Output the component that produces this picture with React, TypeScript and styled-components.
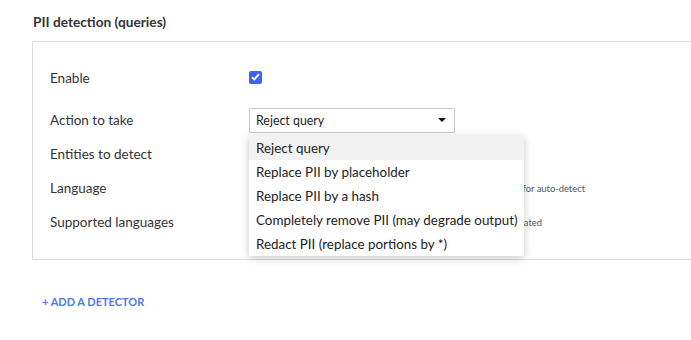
import React from "react";
import styled, { createGlobalStyle } from "styled-components";

const Global = createGlobalStyle`
  html, body { margin: 0; padding: 0; background: #fff; overflow: hidden; }
  body { font-family: "Lato", "Liberation Sans", sans-serif; color: #333; }
`;

const Page = styled.div`
  width: 691px;
  height: 340px;
  overflow: hidden;
  padding-top: 13px;
  box-sizing: border-box;
`;

const Title = styled.h3`
  margin: 0 0 0 33px;
  font-size: 13.7px;
  font-weight: 700;
  line-height: 18px;
  color: #333;
`;

const Panel = styled.div`
  margin: 10px 0 0 32px;
  width: 720px;
  border: 1px solid #dcdcdc;
  box-sizing: border-box;
  padding: 19px 0 20px 17px;
  display: flex;
  flex-direction: column;
`;

const Row = styled.div<{ $gap?: number }>`
  display: flex;
  align-items: center;
  height: 34px;
  margin-top: ${(p) => p.$gap ?? 0}px;
  position: relative;
`;

const Label = styled.div`
  width: 199px;
  flex: none;
  font-size: 13.5px;
  color: #333;
`;

const Value = styled.div`
  position: relative;
  display: flex;
  align-items: center;
  flex: 1;
`;

const Check = styled.span`
  width: 13px;
  height: 13px;
  border-radius: 2px;
  background: #3d63f2;
  display: inline-flex;
  align-items: center;
  justify-content: center;
  margin-top: -2px;
`;

const Select = styled.div`
  width: 206px;
  height: 25px;
  box-sizing: border-box;
  border: 1px solid #c8c8c8;
  border-radius: 1px;
  display: flex;
  align-items: center;
  justify-content: space-between;
  padding: 0 8px 0 6px;
  font-size: 12.4px;
  color: #222;
  background: #fff;
`;

const Arrow = styled.span`
  width: 0;
  height: 0;
  border-left: 4px solid transparent;
  border-right: 4px solid transparent;
  border-top: 4px solid #111;
`;

const Help = styled.span<{ $end: number }>`
  display: block;
  width: ${(p) => p.$end}px;
  text-align: right;
  font-size: 9.4px;
  color: #555;
  white-space: nowrap;
`;

const Menu = styled.ul`
  position: absolute;
  left: 0;
  top: 28px;
  width: 275px;
  margin: 0;
  padding: 0;
  list-style: none;
  background: #fff;
  box-shadow: 0 2px 8px rgba(0, 0, 0, 0.22);
  z-index: 10;
`;

const Item = styled.li<{ $active?: boolean }>`
  height: 24px;
  line-height: 24px;
  padding-left: 7px;
  font-size: 13.4px;
  color: #222;
  white-space: nowrap;
  background: ${(p) => (p.$active ? "#f2f2f2" : "#fff")};
`;

const AddLink = styled.a`
  display: inline-block;
  margin: 35px 0 0 42px;
  font-size: 11px;
  font-weight: 700;
  color: #4b7be5;
  text-transform: uppercase;
  cursor: pointer;
`;

const options = [
  "Reject query",
  "Replace PII by placeholder",
  "Replace PII by a hash",
  "Completely remove PII (may degrade output)",
  "Redact PII (replace portions by *)",
];

export default function App() {
  return (
    <Page>
      <Global />
      <Title>PII detection (queries)</Title>
      <Panel>
        <Row>
          <Label>Enable</Label>
          <Value>
            <Check>
              <svg width="9" height="8" viewBox="0 0 9 8">
                <path d="M1 4.2 L3.4 6.4 L8 1.2" stroke="#fff" strokeWidth="2" fill="none" />
              </svg>
            </Check>
          </Value>
        </Row>
        <Row $gap={8}>
          <Label>Action to take</Label>
          <Value>
            <Select>
              <span>Reject query</span>
              <Arrow />
            </Select>
            <Menu>
              {options.map((o, i) => (
                <Item key={o} $active={i === 0}>
                  {o}
                </Item>
              ))}
            </Menu>
          </Value>
        </Row>
        <Row>
          <Label>Entities to detect</Label>
          <Value />
        </Row>
        <Row>
          <Label>Language</Label>
          <Value>
            <Help $end={336}>Select a language for auto-detect</Help>
          </Value>
        </Row>
        <Row>
          <Label>Supported languages</Label>
          <Value>
            <Help $end={293}>Generated</Help>
          </Value>
        </Row>
      </Panel>
      <AddLink>+ Add a detector</AddLink>
    </Page>
  );
}
